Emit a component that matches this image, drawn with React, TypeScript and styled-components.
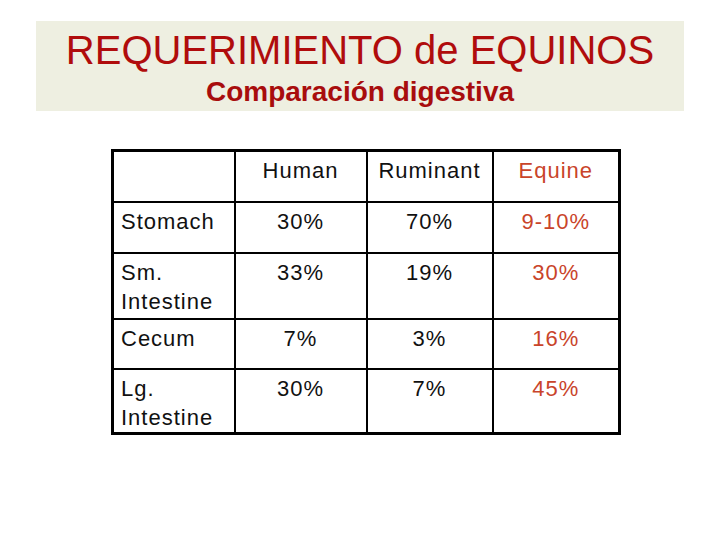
import React from "react";
import styled, { createGlobalStyle } from "styled-components";

const GlobalStyle = createGlobalStyle`
  html, body {
    margin: 0;
    padding: 0;
    background: #ffffff;
  }

  body {
    font-family: "Liberation Sans", Arial, sans-serif;
    width: 720px;
    height: 540px;
    overflow: hidden;
  }
`;

type Row = {
  label: string[];
  human: string;
  ruminant: string;
  equine: string;
  height: number;
};

const rows: Row[] = [
  { label: ["Stomach"], human: "30%", ruminant: "70%", equine: "9-10%", height: 51 },
  { label: ["Sm.", "Intestine"], human: "33%", ruminant: "19%", equine: "30%", height: 66 },
  { label: ["Cecum"], human: "7%", ruminant: "3%", equine: "16%", height: 50 },
  { label: ["Lg.", "Intestine"], human: "30%", ruminant: "7%", equine: "45%", height: 64 },
];

const App = () => {
  return (
    <Page>
      <GlobalStyle />
      <Banner>
        <Title>REQUERIMIENTO de EQUINOS</Title>
        <Subtitle>Comparación digestiva</Subtitle>
      </Banner>

      <Table>
        <colgroup>
          <col style={{ width: 122 }} />
          <col style={{ width: 132 }} />
          <col style={{ width: 126 }} />
          <col style={{ width: 127 }} />
        </colgroup>
        <tbody>
          <tr style={{ height: 51 }}>
            <Cell />
            <Cell $center>Human</Cell>
            <Cell $center>Ruminant</Cell>
            <Cell $center $accent>Equine</Cell>
          </tr>
          {rows.map((row) => (
            <tr key={row.label.join(" ")} style={{ height: row.height }}>
              <Cell>
                {row.label.map((line, i) => (
                  <Line key={i}>{line}</Line>
                ))}
              </Cell>
              <Cell $center>{row.human}</Cell>
              <Cell $center>{row.ruminant}</Cell>
              <Cell $center $accent>{row.equine}</Cell>
            </tr>
          ))}
        </tbody>
      </Table>
    </Page>
  );
};

const Page = styled.div`
  width: 720px;
  height: 540px;
  padding-top: 21px;
  box-sizing: border-box;
  display: flex;
  flex-direction: column;
`;

const Banner = styled.div`
  margin-left: 36px;
  width: 648px;
  height: 90px;
  box-sizing: border-box;
  padding-top: 7px;
  background: #eeefe1;
  display: flex;
  flex-direction: column;
  align-items: center;
`;

const Title = styled.h1`
  margin: 0;
  font-size: 40px;
  line-height: 44px;
  font-weight: 400;
  color: #b00c0c;
  white-space: nowrap;
`;

const Subtitle = styled.h2`
  margin: 3px 0 0;
  font-size: 28px;
  line-height: 34px;
  font-weight: 700;
  color: #a80d0d;
  white-space: nowrap;
`;

const Table = styled.table`
  margin: 38px 0 0 111px;
  border-collapse: collapse;
  table-layout: fixed;
  width: 509px;
  border: 3px solid #000000;
`;

const Cell = styled.td<{ $center?: boolean; $accent?: boolean }>`
  border: 2px solid #000000;
  padding: 4px 0 0 ${(p) => (p.$center ? "0" : "7px")};
  vertical-align: top;
  text-align: ${(p) => (p.$center ? "center" : "left")};
  font-size: 22px;
  line-height: 29px;
  letter-spacing: 1px;
  color: ${(p) => (p.$accent ? "#c9442a" : "#111111")};
`;

const Line = styled.div`
  white-space: nowrap;
`;

export default App;
